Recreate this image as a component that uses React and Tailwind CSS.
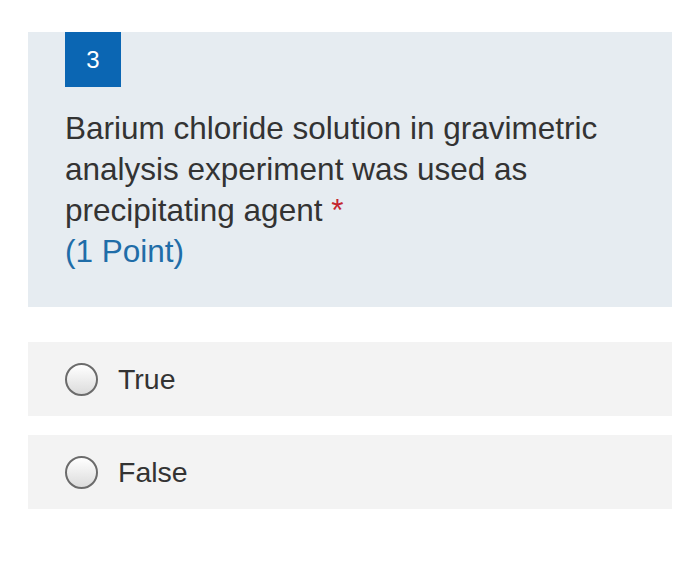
import React from 'react';

export default function App() {
    const options = ['True', 'False'];
    return (
        <div className="w-[700px] h-[570px] bg-white pt-8 px-7" style={{ fontFamily: '"Liberation Sans", Arial, sans-serif' }}>
            <div className="bg-[#e6ecf1] h-[275px] pl-[37px] pr-6">
                <div className="w-[56px] h-[55px] bg-[#0b66b3] flex items-center justify-center text-white text-[24px]">3</div>
                <div className="mt-[21px] text-[31.5px] leading-[41px] text-[#333333]">
                    Barium chloride solution in gravimetric
                    <br />
                    analysis experiment was used as
                    <br />
                    precipitating agent <span className="text-[#c4262e]">*</span>
                </div>
                <div className="text-[31.5px] leading-[41px] text-[#1f6da8]">(1 Point)</div>
            </div>
            <div className="mt-[35px] flex flex-col gap-[19px]">
                {options.map((o) => (
                    <div key={o} className="h-[74px] bg-[#f3f3f3] flex items-center pl-[37px]">
                        <div className="w-[33px] h-[33px] rounded-full border-2 border-[#6b6b6b] bg-gradient-to-b from-[#ffffff] to-[#dcdcdc]" />
                        <span className="ml-[20px] text-[28.5px] text-[#333333]">{o}</span>
                    </div>
                ))}
            </div>
        </div>
    );
}
